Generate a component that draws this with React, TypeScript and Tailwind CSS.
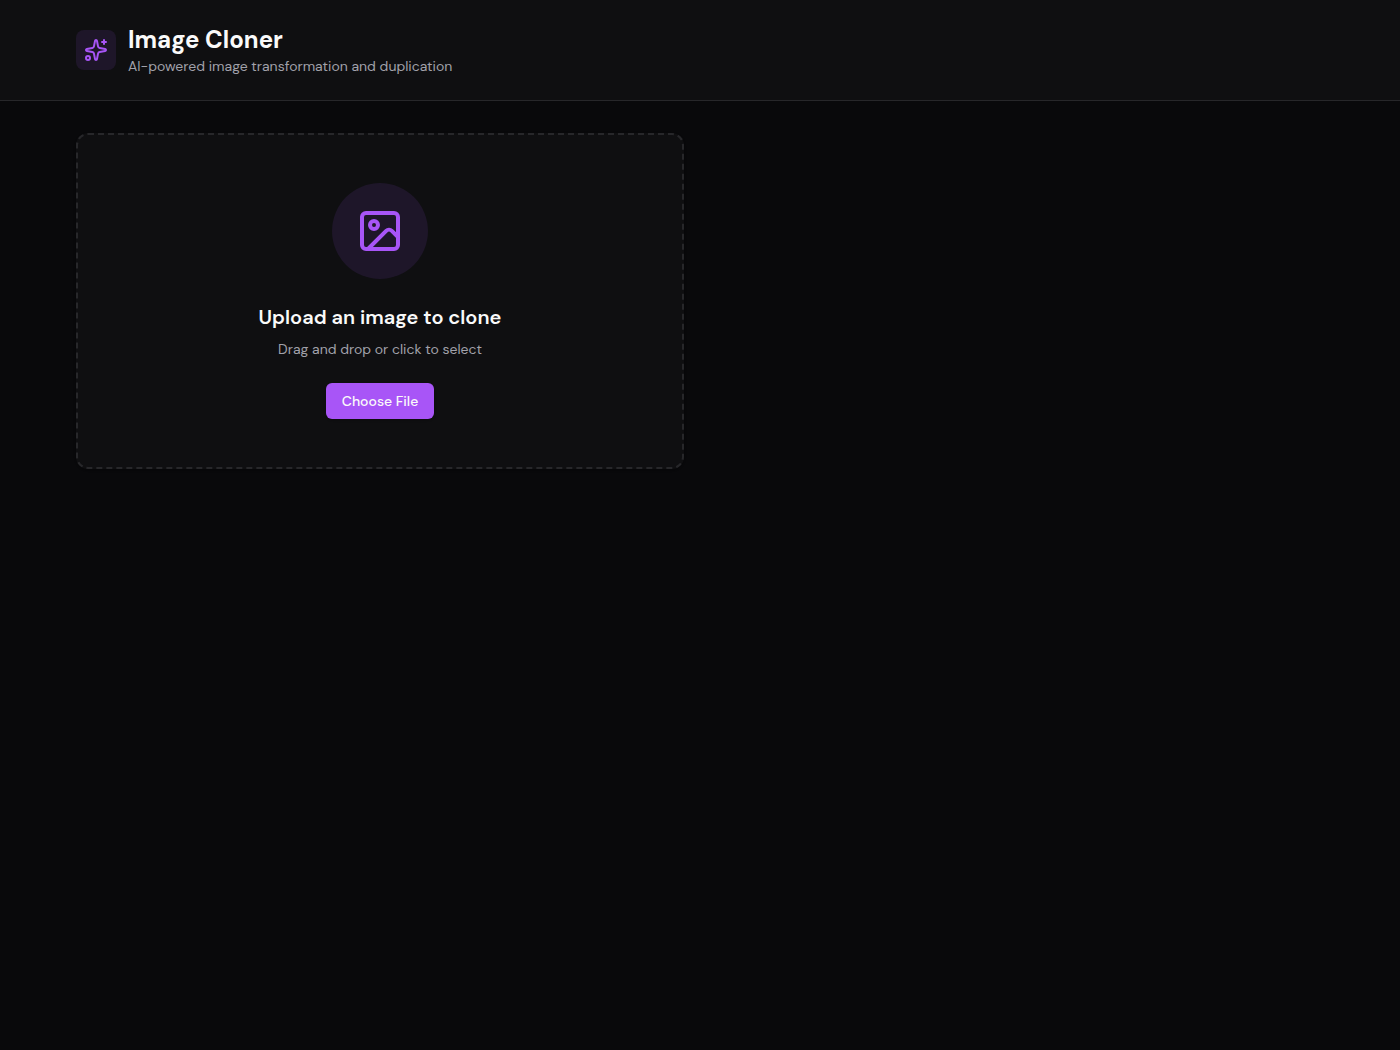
import React, { useRef, useState } from "react";
import { Image, Sparkles } from "lucide-react";

const Header: React.FC = () => {
  return (
    <header className="border-b border-[#27272a] bg-[#0f0f11]">
      <div className="mx-auto max-w-7xl px-4 py-6">
        <div className="flex items-center gap-3">
          <div className="rounded-lg bg-[#1e1629] p-2">
            <Sparkles className="size-6 text-[#a855f7]" />
          </div>
          <div>
            <h1 className="text-2xl font-bold text-[#fafafa]">Image Cloner</h1>
            <p className="text-sm text-[#a1a1aa]">
              AI-powered image transformation and duplication
            </p>
          </div>
        </div>
      </div>
    </header>
  );
};

const UploadCard: React.FC = () => {
  const inputRef = useRef<HTMLInputElement>(null);
  const [isDragging, setIsDragging] = useState(false);

  const handleDrop = (e: React.DragEvent) => {
    e.preventDefault();
    setIsDragging(false);
    if (inputRef.current) inputRef.current.files = e.dataTransfer.files;
  };

  return (
    <div
      onDragOver={(e) => {
        e.preventDefault();
        setIsDragging(true);
      }}
      onDragLeave={() => setIsDragging(false)}
      onDrop={handleDrop}
      className={`flex flex-col items-center rounded-xl border-2 border-dashed p-12 text-center shadow-sm ${
        isDragging ? "border-[#a855f7] bg-[#1e1629]" : "border-[#27272a] bg-[#0f0f11]"
      }`}
    >
      <div className="mb-6 rounded-full bg-[#1e1629] p-6">
        <Image className="size-12 text-[#a855f7]" />
      </div>
      <h2 className="mb-2 text-xl font-semibold text-[#fafafa]">
        Upload an image to clone
      </h2>
      <p className="mb-6 text-sm text-[#a1a1aa]">
        Drag and drop or click to select
      </p>
      <input
        ref={inputRef}
        type="file"
        accept="image/*"
        aria-label="Image file"
        className="hidden"
      />
      <button
        type="button"
        onClick={() => inputRef.current?.click()}
        className="h-9 cursor-pointer rounded-md bg-[#a855f7] px-4 text-sm font-medium text-[#fafafa] shadow-sm hover:bg-[#9333ea]"
      >
        Choose File
      </button>
    </div>
  );
};

export default function App() {
  return (
    <div className="min-h-screen bg-[#09090b] font-['DM_Sans','Inter',sans-serif]">
      <Header />
      <main className="mx-auto max-w-7xl px-4 py-8">
        <div className="grid gap-8 lg:grid-cols-2">
          <UploadCard />
        </div>
      </main>
    </div>
  );
}
